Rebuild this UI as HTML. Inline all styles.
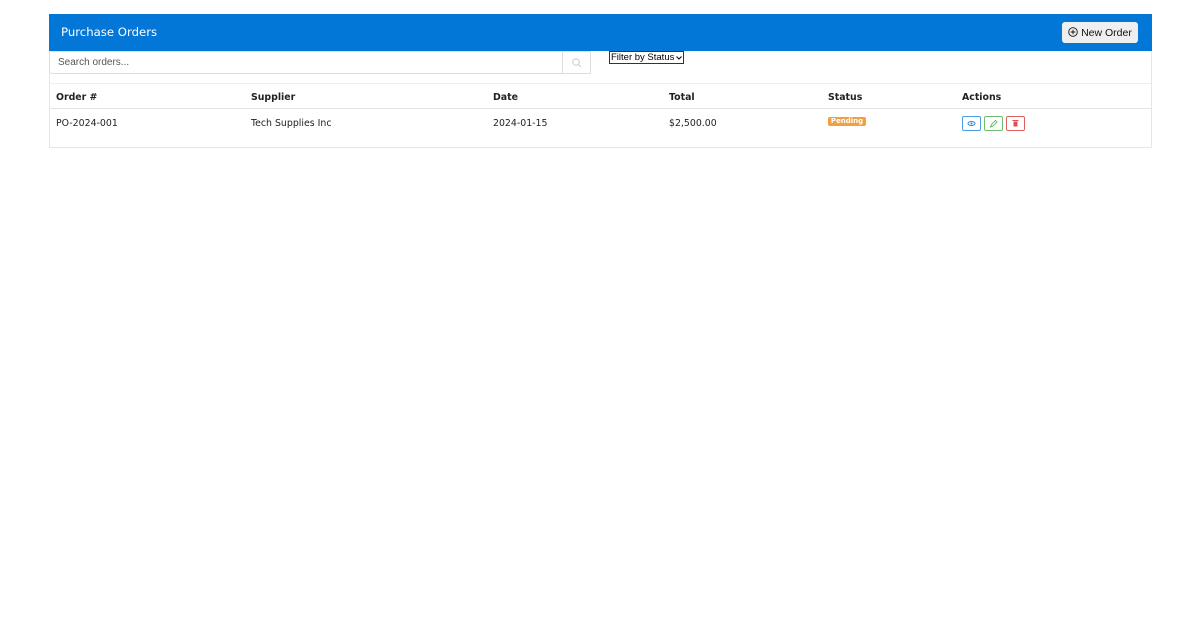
<!DOCTYPE html>
<html><head><style>
body{margin:0;background:#fff;font-family:"DejaVu Sans",sans-serif;}
.card{position:absolute;left:49px;top:14px;width:1101px;height:133px;border:1px solid #e6e6e6;border-top:none;box-sizing:content-box}
.hdr{position:absolute;left:-1px;top:0;width:1103px;height:37px;background:#0277d8;color:#fff;font-size:11.7px}
.hdr .t{position:absolute;left:12px;top:11px}
.btn{position:absolute;left:1013px;top:8px;width:76px;height:21px;background:#efefef;border-radius:3px;color:#111;font:10.5px "Liberation Sans",sans-serif;line-height:22px;text-align:center}
.search{position:absolute;left:-1px;top:37px;border:1px solid #ddd;border-radius:3px 0 0 3px;font:10px "Liberation Sans",sans-serif;color:#555;line-height:22px;padding-left:8px;box-sizing:border-box;width:514px;height:23px}
.sb{position:absolute;left:512px;top:37px;width:29px;height:23px;border:1px solid #ddd;box-sizing:border-box}
.sel{position:absolute;left:559px;top:37px;width:75px;height:13px;border:1px solid #333;font:9.5px "Liberation Sans",sans-serif;line-height:12px;box-sizing:border-box;padding-left:1px;color:#000}
.l{position:absolute;left:0;width:1101px;height:1px;background:#eee}
.c{position:absolute;font-size:9.4px;color:#222}
.b{font-weight:bold}
.ab{position:absolute;top:102px;width:19px;height:15px;border:1px solid;border-radius:2px;box-sizing:border-box}
.ab svg{display:block}
</style></head><body>
<div class="card">
<div class="hdr"><span class="t">Purchase Orders</span>
<div class="btn"><svg width="10" height="10" viewBox="0 0 10 10" style="vertical-align:-1px"><circle cx="5" cy="5" r="4.3" fill="none" stroke="#111" stroke-width="0.9"/><path d="M5 2.7v4.6M2.7 5h4.6" stroke="#111" stroke-width="0.9"/></svg> New Order</div></div>
<div class="search">Search orders...</div>
<div class="sb"><svg width="12" height="12" viewBox="0 0 12 12" style="position:absolute;left:8px;top:5px"><circle cx="5" cy="5" r="3.3" fill="none" stroke="#ccc"/><path d="M7.5 7.5l2.5 2.5" stroke="#ccc"/></svg></div>
<div class="sel">Filter by Status<svg width="6" height="4" viewBox="0 0 6 4" style="position:absolute;right:1px;top:4px"><path d="M0.5 0.5l2.5 2.5 2.5-2.5" fill="none" stroke="#000"/></svg></div>
<div class="l" style="top:69px"></div>
<div class="l" style="top:94px;background:#e4e4e4"></div>
<div class="c b" style="left:6px;top:78px">Order #</div>
<div class="c b" style="left:201px;top:78px">Supplier</div>
<div class="c b" style="left:443px;top:78px">Date</div>
<div class="c b" style="left:619px;top:78px">Total</div>
<div class="c b" style="left:778px;top:78px">Status</div>
<div class="c b" style="left:912px;top:78px">Actions</div>
<div class="c" style="left:6px;top:104px">PO-2024-001</div>
<div class="c" style="left:201px;top:104px">Tech Supplies Inc</div>
<div class="c" style="left:443px;top:104px">2024-01-15</div>
<div class="c" style="left:619px;top:104px">$2,500.00</div>
<div style="position:absolute;left:778px;top:103px;width:38px;height:9px;background:#f0a040;border-radius:2px;color:#fff;font-size:7px;font-weight:bold;text-align:center;line-height:9px">Pending</div>
<div class="ab" style="left:912px;border-color:#4a9be8"><svg width="17" height="13" viewBox="0 0 17 13"><ellipse cx="8.5" cy="6.5" rx="3.5" ry="2" fill="none" stroke="#2a8ae0"/><circle cx="8.5" cy="6.5" r="1" fill="#2a8ae0"/></svg></div>
<div class="ab" style="left:934px;border-color:#6bc06b"><svg width="17" height="13" viewBox="0 0 17 13"><path d="M5.5 10l1-2.5 4-4 1.5 1.5-4 4z" fill="none" stroke="#4caf50" stroke-width="0.8"/></svg></div>
<div class="ab" style="left:956px;border-color:#e06060"><svg width="17" height="13" viewBox="0 0 17 13"><path d="M5.5 3.5h6" stroke="#e05050"/><rect x="6.5" y="4.5" width="4" height="5" fill="#e05050"/></svg></div>
</div>
</body></html>
